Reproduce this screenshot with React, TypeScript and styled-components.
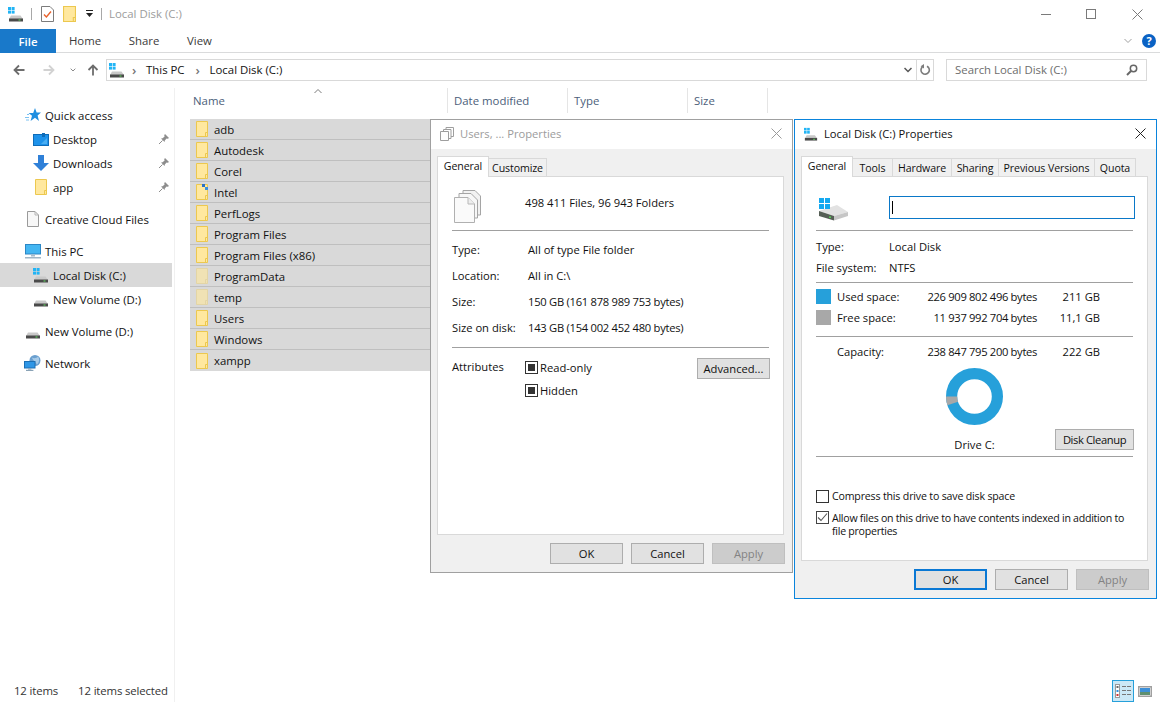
import React, { FC } from "react";
import styled, { createGlobalStyle } from "styled-components";

const folders = [
  "adb",
  "Autodesk",
  "Corel",
  "Intel",
  "PerfLogs",
  "Program Files",
  "Program Files (x86)",
  "ProgramData",
  "temp",
  "Users",
  "Windows",
  "xampp",
];

const FolderIcon: FC<{ dim?: boolean; link?: boolean; size?: number }> = ({ dim, link, size = 12 }) => (
  <svg width={size} height={16} viewBox="0 0 12 16" preserveAspectRatio="none" style={{ flex: "none" }}>
    <path d="M.5 .5H11.5V15.5H.5Z" fill={dim ? "#f0e2b4" : "#ffe89f"} stroke={dim ? "#e3d5a5" : "#ecc84f"} />
    <path d="M9.5 15.5V11.5H11.5" fill="none" stroke={dim ? "#e3d5a5" : "#ecc84f"} />
    {link && (
      <>
        <rect x="6" y="0" width="3" height="3" fill="#2a70c8" />
        <rect x="9" y="3" width="3" height="3" fill="#3a8fe0" />
      </>
    )}
  </svg>
);

const DriveIcon: FC<{ win?: boolean; size?: number }> = ({ win, size = 16 }) => (
  <svg width={size} height={size} viewBox="0 0 16 16" style={{ flex: "none" }}>
    <path d="M3 9.5H12.5L15 13H1Z" fill="#c9c9c9" />
    <rect x="1" y="12.5" width="14" height="3" fill="#4a4a4a" />
    <rect x="10.5" y="13.5" width="2" height="1" fill="#5fe05f" />
    {win && (
      <g fill="#21b4f5">
        <rect x="0" y="1" width="3" height="3" />
        <rect x="3.6" y="1" width="3" height="3" />
        <rect x="0" y="4.6" width="3" height="3" />
        <rect x="3.6" y="4.6" width="3" height="3" />
      </g>
    )}
  </svg>
);

const LargeDriveIcon: FC = () => (
  <svg width="32" height="26" viewBox="0 0 32 26" style={{ flex: "none" }}>
    <path d="M1 14L19 8 30 15 16 19Z" fill="#e2e2e2" />
    <path d="M1 14V19L16 23.5V19Z" fill="#565f56" />
    <path d="M16 19V23.5L30 19V15Z" fill="#c6c6c6" />
    <rect x="11" y="19.5" width="2" height="1.4" fill="#57d957" />
    <g fill="#14a9f0">
      <rect x="1" y="1" width="5" height="5" />
      <rect x="7" y="1" width="5" height="5" />
      <rect x="1" y="7" width="5" height="5" />
      <rect x="7" y="7" width="5" height="5" />
    </g>
  </svg>
);

const StarIcon: FC = () => (
  <svg width="16" height="14" viewBox="0 0 16 14" style={{ flex: "none" }}>
    <path d="M10 0L11.6 4.6H16L12.6 7.6 14 13 10 9.8 5.6 13 7 7.8 3.6 5H8.2Z" fill="#1f8fe0" />
    <path d="M0 9.5H4M1 12H4M2 6.5H4" stroke="#7cc2f2" fill="none" />
  </svg>
);

const DesktopIcon: FC = () => (
  <svg width="16" height="13" viewBox="0 0 16 13" style={{ flex: "none" }}>
    <rect x=".5" y="1.5" width="15" height="11" fill="#1e92ea" stroke="#0f6cb8" />
    <path d="M9 0H12V4H9Z" fill="#0f6cb8" />
    <path d="M8 11L14 5V11Z" fill="#49aef3" />
  </svg>
);

const DownloadsIcon: FC = () => (
  <svg width="16" height="16" viewBox="0 0 16 16" style={{ flex: "none" }}>
    <path d="M5 0H11V8H16L8 16 0 8H5Z" fill="#2f80d8" />
  </svg>
);

const PinIcon: FC = () => (
  <svg width="10" height="10" viewBox="0 0 10 10" style={{ flex: "none" }}>
    <path d="M6 0L10 4 8.8 4.8 7.6 4.4 5.8 6.4 5.6 8 2 4.4 3.6 4.2 5.6 2.4 5.2 1.2Z" fill="#8d8d8d" />
    <path d="M3.5 6.5L0 10" stroke="#8d8d8d" fill="none" />
  </svg>
);

const FileIcon: FC = () => (
  <svg width="12" height="16" viewBox="0 0 12 16" style={{ flex: "none" }}>
    <path d="M.5 .5H8L11.5 4V15.5H.5Z" fill="#f7f7f7" stroke="#9a9a9a" />
    <path d="M8 .5V4H11.5" fill="none" stroke="#b5b5b5" />
  </svg>
);

const MonitorIcon: FC = () => (
  <svg width="16" height="15" viewBox="0 0 16 15" style={{ flex: "none" }}>
    <rect x=".5" y=".5" width="15" height="9.5" fill="#44b6f2" stroke="#2c87c6" />
    <rect x="6" y="10.5" width="4" height="2" fill="#a8bccb" />
    <rect x="0" y="13" width="16" height="1.5" fill="#9fb6c7" />
  </svg>
);

const NetworkIcon: FC = () => (
  <svg width="17" height="16" viewBox="0 0 17 16" style={{ flex: "none" }}>
    <circle cx="11" cy="5.5" r="5.5" fill="#6a9fcf" />
    <path d="M8 2.5C10 4 13 3 14 1.6 16 4 15 8 13 9.6 12 7 9 6 8 2.5Z" fill="#a8cbe8" />
    <rect x=".5" y="6.5" width="10.5" height="6.5" fill="#2e96e6" stroke="#1c6fb4" />
    <rect x="4" y="13.4" width="3.4" height="1.2" fill="#8aa3b6" />
    <rect x="2" y="14.8" width="7.4" height="1.2" fill="#8aa3b6" />
  </svg>
);

const NoteIcon: FC = () => (
  <svg width="13" height="16" viewBox="0 0 13 16" style={{ flex: "none" }}>
    <path d="M.5 .5H9L12.5 4V15.5H.5Z" fill="#fff" stroke="#7c7c7c" />
    <path d="M3 8.5L5.4 11 10 5.5" fill="none" stroke="#e8622c" strokeWidth="1.4" />
  </svg>
);

const QuickDropIcon: FC = () => (
  <svg width="9" height="8" viewBox="0 0 9 8" style={{ flex: "none" }}>
    <rect x="1" y="0" width="7" height="1" fill="#222" />
    <path d="M1 3H8L4.5 7Z" fill="#222" />
  </svg>
);

const StackIcon: FC = () => (
  <svg width="14" height="14" viewBox="0 0 14 14" style={{ flex: "none" }}>
    <path d="M6 .5H13.5V9.5H6Z" fill="#fff" stroke="#9e9e9e" />
    <path d="M3.5 2.5H11V11.5H3.5Z" fill="#fff" stroke="#9e9e9e" />
    <path d="M.5 4.5H8.5V13.5H.5Z" fill="#fff" stroke="#9e9e9e" />
  </svg>
);

const LargeStackIcon: FC = () => (
  <svg width="27" height="33" viewBox="0 0 27 33" style={{ flex: "none" }}>
    <path d="M9 .5H21L26.5 6V25H9Z" fill="#f2f2f2" stroke="#a5a5a5" />
    <path d="M5 3.5H17L23.5 10V28H5Z" fill="#f7f7f7" stroke="#a5a5a5" />
    <path d="M.5 7.5H14L20.5 14V32.5H.5Z" fill="#fafafa" stroke="#b0b0b0" />
    <path d="M14 7.5V14H20.5" fill="#eee" stroke="#b8b8b8" />
  </svg>
);

const ArrowIcon: FC<{ color: string; rotate?: number }> = ({ color, rotate = 0 }) => (
  <svg width="12" height="12" viewBox="0 0 12 12" style={{ transform: `rotate(${rotate}deg)`, flex: "none" }}>
    <path d="M11.5 6H1.5M6 1.5L1.5 6 6 10.5" fill="none" stroke={color} strokeWidth="1.8" />
  </svg>
);

const Chevron: FC<{ size?: number; color?: string; width?: number; up?: boolean }> = ({
  size = 6,
  color = "#555",
  width = 1.5,
  up,
}) => (
  <svg width={size + 2} height={size} viewBox="0 0 8 6" style={{ flex: "none" }}>
    <path d={up ? "M.5 5L4 1.5 7.5 5" : "M.5 1L4 4.5 7.5 1"} fill="none" stroke={color} strokeWidth={width} />
  </svg>
);

const CloseIcon: FC<{ color: string }> = ({ color }) => (
  <svg width="11" height="11" viewBox="0 0 11 11" style={{ flex: "none" }}>
    <path d="M.5 .5L10.5 10.5M10.5 .5L.5 10.5" stroke={color} fill="none" />
  </svg>
);

const Donut: FC = () => (
  <svg width="57" height="57" viewBox="0 0 56 56" style={{ flex: "none" }}>
    <circle cx="28" cy="28" r="22.5" fill="none" stroke="#26a0da" strokeWidth="11" />
    <path d="M5.5 28A22.5 22.5 0 0 0 6.6 34.95" fill="none" stroke="#a8a8a8" strokeWidth="11" />
  </svg>
);

const App: FC = () => (
  <>
    <GlobalStyle />
    <Screen>
      <TitleBar>
        <DriveIcon win />
        <TitleSep />
        <NoteIcon />
        <FolderIcon size={13} />
        <QuickDropIcon />
        <TitleSep />
        <WindowTitle>Local Disk (C:)</WindowTitle>
        <WindowButtons>
          <Minimize />
          <Maximize />
          <CloseSlot>
            <CloseIcon color="#7a7a7a" />
          </CloseSlot>
        </WindowButtons>
      </TitleBar>

      <Ribbon>
        <FileTab>File</FileTab>
        <RibbonTab $width={58}>Home</RibbonTab>
        <RibbonTab $width={60}>Share</RibbonTab>
        <RibbonTab $width={51}>View</RibbonTab>
        <RibbonRight>
          <Chevron size={6} color="#a0a0a0" width={1} />
          <HelpBadge>?</HelpBadge>
        </RibbonRight>
      </Ribbon>

      <NavBar>
        <NavButton>
          <ArrowIcon color="#6d6d6d" />
        </NavButton>
        <NavButton>
          <ArrowIcon color="#d2d2d2" rotate={180} />
        </NavButton>
        <NavMini>
          <Chevron size={4} color="#8a8a8a" />
        </NavMini>
        <NavButton>
          <ArrowIcon color="#6d6d6d" rotate={90} />
        </NavButton>
        <AddressBox>
          <DriveIcon win />
          <Crumb>
            <CrumbArrow>›</CrumbArrow>This PC
          </Crumb>
          <Crumb>
            <CrumbArrow>›</CrumbArrow>Local Disk (C:)
          </Crumb>
          <AddressTools>
            <Chevron size={6} color="#555" />
            <RefreshBox>
              <svg width="12" height="12" viewBox="0 0 12 12">
                <path d="M3.4 2.8A4.2 4.2 0 1 0 8 2.2" fill="none" stroke="#7c7c7c" strokeWidth="1.6" />
                <path d="M5 0V4.4L1.6 2.2Z" fill="#7c7c7c" />
              </svg>
            </RefreshBox>
          </AddressTools>
        </AddressBox>
        <SearchBox>
          Search Local Disk (C:)
          <svg width="12" height="12" viewBox="0 0 12 12">
            <circle cx="7.5" cy="4.5" r="3.2" fill="none" stroke="#666" strokeWidth="1.5" />
            <path d="M5 7L1 11" stroke="#666" strokeWidth="2" />
          </svg>
        </SearchBox>
      </NavBar>

      <Main>
        <Sidebar>
          <SideGroup>
            <SideRow>
              <SideIcon>
                <StarIcon />
              </SideIcon>
              Quick access
            </SideRow>
            <SideRow $child>
              <SideIcon>
                <DesktopIcon />
              </SideIcon>
              Desktop
              <PinSlot>
                <PinIcon />
              </PinSlot>
            </SideRow>
            <SideRow $child>
              <SideIcon>
                <DownloadsIcon />
              </SideIcon>
              Downloads
              <PinSlot>
                <PinIcon />
              </PinSlot>
            </SideRow>
            <SideRow $child>
              <SideIcon>
                <FolderIcon />
              </SideIcon>
              app
              <PinSlot>
                <PinIcon />
              </PinSlot>
            </SideRow>
          </SideGroup>
          <SideGroup>
            <SideRow>
              <SideIcon>
                <FileIcon />
              </SideIcon>
              Creative Cloud Files
            </SideRow>
          </SideGroup>
          <SideGroup>
            <SideRow>
              <SideIcon>
                <MonitorIcon />
              </SideIcon>
              This PC
            </SideRow>
            <SideRow $child $selected>
              <SideIcon>
                <DriveIcon win />
              </SideIcon>
              Local Disk (C:)
            </SideRow>
            <SideRow $child>
              <SideIcon>
                <DriveIcon />
              </SideIcon>
              New Volume (D:)
            </SideRow>
          </SideGroup>
          <SideGroup>
            <SideRow>
              <SideIcon>
                <DriveIcon />
              </SideIcon>
              New Volume (D:)
            </SideRow>
          </SideGroup>
          <SideGroup>
            <SideRow>
              <SideIcon>
                <NetworkIcon />
              </SideIcon>
              Network
            </SideRow>
          </SideGroup>
        </Sidebar>

        <Content>
          <ColumnHeader>
            <Column $width={258}>
              Name
              <SortCaret>
                <Chevron size={6} color="#7a7a7a" width={1} up />
              </SortCaret>
            </Column>
            <Column $width={120}>Date modified</Column>
            <Column $width={120}>Type</Column>
            <Column $width={80}>Size</Column>
          </ColumnHeader>
          <FileList>
            {folders.map((name, i) => (
              <FileRow key={name}>
                <FolderIcon dim={i === 7 || i === 8} link={name === "Intel"} />
                {name}
              </FileRow>
            ))}
          </FileList>
        </Content>
      </Main>

      <StatusBar>
        <span>12 items</span>
        <span>12 items selected</span>
        <ViewButtons>
          <DetailsToggle>
            <svg width="16" height="14" viewBox="0 0 16 14">
              <rect x=".5" y=".5" width="4" height="13" fill="#fff" stroke="#9a9a9a" />
              <rect x="1.5" y="2" width="2" height="2" fill="#6a6a6a" />
              <rect x="1.5" y="6" width="2" height="2" fill="#2a8ee0" />
              <rect x="1.5" y="10" width="2" height="2" fill="#d03030" />
              <path d="M7 2.5H11M12 2.5H16M7 6.5H11M12 6.5H16M7 10.5H11M12 10.5H16" stroke="#777" />
            </svg>
          </DetailsToggle>
          <svg width="14" height="11" viewBox="0 0 14 11">
            <rect x=".75" y=".75" width="12.5" height="9.5" fill="#fff" stroke="#a0a0a0" strokeWidth="1.5" />
            <rect x="2" y="2" width="10" height="4" fill="#3d8fd8" />
            <rect x="2" y="6" width="10" height="3" fill="#5f8f6f" />
          </svg>
        </ViewButtons>
      </StatusBar>

      <Dialog $left={430} $top={119} $borderColor="#a0a0a0">
        <DialogTitle $inactive>
          <StackIcon />
          <span>Users, ... Properties</span>
          <DialogClose>
            <CloseIcon color="#9a9a9a" />
          </DialogClose>
        </DialogTitle>
        <DialogBody>
          <Tabs>
            <Tab $active $width={52}>
              General
            </Tab>
            <Tab $width={59}>Customize</Tab>
          </Tabs>
          <Panel $height={359}>
            <PanelHead>
              <HeadIcon $top={13}>
                <LargeStackIcon />
              </HeadIcon>
              <HeadText>498 411 Files, 96 943 Folders</HeadText>
            </PanelHead>
            <Divider />
            <InfoList $rowHeight={26} $top={5} $bottom={7} $labelWidth={76}>
              <span>Type:</span>
              <span>All of type File folder</span>
              <span>Location:</span>
              <span>All in C:\</span>
              <span>Size:</span>
              <Digits>150 GB (161 878 989 753 bytes)</Digits>
              <span>Size on disk:</span>
              <Digits>143 GB (154 002 452 480 bytes)</Digits>
            </InfoList>
            <Divider />
            <Attributes>
              <AttributesLabel>Attributes</AttributesLabel>
              <AttributeList>
                <CheckRow>
                  <CheckBox $mixed />
                  Read-only
                </CheckRow>
                <CheckRow>
                  <CheckBox $mixed />
                  Hidden
                </CheckRow>
              </AttributeList>
              <DialogButton>Advanced...</DialogButton>
            </Attributes>
          </Panel>
          <DialogFooter>
            <DialogButton>OK</DialogButton>
            <DialogButton>Cancel</DialogButton>
            <DialogButton $disabled>Apply</DialogButton>
          </DialogFooter>
        </DialogBody>
      </Dialog>

      <Dialog $left={794} $top={119} $borderColor="#0a84dc">
        <DialogTitle>
          <DriveIcon win size={14} />
          <span>Local Disk (C:) Properties</span>
          <DialogClose>
            <CloseIcon color="#222" />
          </DialogClose>
        </DialogTitle>
        <DialogBody>
          <Tabs>
            <Tab $active $width={52}>
              General
            </Tab>
            <Tab $width={41}>Tools</Tab>
            <Tab $width={60}>Hardware</Tab>
            <Tab $width={48}>Sharing</Tab>
            <Tab $width={97}>Previous Versions</Tab>
            <Tab $width={42}>Quota</Tab>
          </Tabs>
          <Panel $height={385}>
            <PanelHead>
              <HeadIcon $top={20}>
                <LargeDriveIcon />
              </HeadIcon>
              <NameInput>
                <Caret />
              </NameInput>
            </PanelHead>
            <Divider />
            <InfoList $rowHeight={21} $top={5} $bottom={4} $labelWidth={73}>
              <span>Type:</span>
              <span>Local Disk</span>
              <span>File system:</span>
              <span>NTFS</span>
            </InfoList>
            <Divider />
            <SpaceGrid>
              <Swatch $color="#26a0da" />
              <span>Used space:</span>
              <SpaceValue $tight>226 909 802 496 bytes</SpaceValue>
              <SpaceValue>211 GB</SpaceValue>
              <Swatch $color="#a8a8a8" />
              <span>Free space:</span>
              <SpaceValue $tight>11 937 992 704 bytes</SpaceValue>
              <SpaceValue>11,1 GB</SpaceValue>
            </SpaceGrid>
            <Divider />
            <CapacityGrid>
              <span />
              <span>Capacity:</span>
              <SpaceValue $tight>238 847 795 200 bytes</SpaceValue>
              <SpaceValue>222 GB</SpaceValue>
            </CapacityGrid>
            <ChartArea>
              <ChartColumn>
                <Donut />
                <span>Drive C:</span>
              </ChartColumn>
              <CleanupSlot>
                <DialogButton $width={79} $tight>
                  Disk Cleanup
                </DialogButton>
              </CleanupSlot>
            </ChartArea>
            <Divider />
            <Options>
              <CheckRow>
                <CheckBox />
                Compress this drive to save disk space
              </CheckRow>
              <CheckRow $top>
                <CheckBox $checked>
                  <svg width="11" height="11" viewBox="0 0 11 11">
                    <path d="M1 5.5L4 8.5 10 1.5" fill="none" stroke="#555" strokeWidth="1.1" />
                  </svg>
                </CheckBox>
                <IndexLabel>
                  Allow files on this drive to have contents indexed in addition to
                  <br />
                  file properties
                </IndexLabel>
              </CheckRow>
            </Options>
          </Panel>
          <DialogFooter>
            <DialogButton $default>OK</DialogButton>
            <DialogButton>Cancel</DialogButton>
            <DialogButton $disabled>Apply</DialogButton>
          </DialogFooter>
        </DialogBody>
      </Dialog>
    </Screen>
  </>
);

export default App;

const GlobalStyle = createGlobalStyle`
  html, body {
    margin: 0;
    padding: 0;
    background: #fff;
  }
  * {
    box-sizing: border-box;
  }
`;

const Screen = styled.div`
  position: relative;
  width: 1160px;
  height: 702px;
  overflow: hidden;
  display: flex;
  flex-direction: column;
  background: #fff;
  color: #000;
  font-family: "Open Sans", "Noto Sans", sans-serif;
  font-size: 11.4px;
`;

const TitleBar = styled.div`
  height: 29px;
  display: flex;
  align-items: center;
  padding: 0 0 1px 8px;
  gap: 9px;
  flex: none;
`;

const TitleSep = styled.div`
  width: 1px;
  height: 12px;
  background: #a8a8a8;
  margin: 0 0 0 -2px;
`;

const WindowTitle = styled.div`
  color: #9c9c9c;
  margin-left: -2px;
  padding-bottom: 1px;
`;

const WindowButtons = styled.div`
  margin-left: auto;
  display: flex;
  align-items: center;
  gap: 35px;
  padding-right: 18px;
`;

const CloseSlot = styled.span`
  display: flex;
  margin: 0 -1px 0 1px;
`;

const Minimize = styled.div`
  width: 10px;
  height: 1px;
  background: #7a7a7a;
`;

const Maximize = styled.div`
  width: 10px;
  height: 10px;
  border: 1px solid #7a7a7a;
`;

const Ribbon = styled.div`
  height: 24px;
  display: flex;
  flex: none;
  border-bottom: 1px solid #dadbdc;
`;

const FileTab = styled.div`
  width: 56px;
  height: 24px;
  background: #1979ca;
  color: #fff;
  display: flex;
  align-items: center;
  justify-content: center;
  font-weight: 600;
`;

const RibbonTab = styled.div<{ $width: number }>`
  width: ${(p) => p.$width}px;
  display: flex;
  align-items: center;
  justify-content: center;
  color: #3b3b3b;
`;

const RibbonRight = styled.div`
  margin-left: auto;
  display: flex;
  align-items: center;
  gap: 10px;
  padding-right: 4px;
`;

const HelpBadge = styled.div`
  width: 14px;
  height: 14px;
  border-radius: 50%;
  background: #0a62c4;
  color: #fff;
  font-size: 11px;
  font-weight: 700;
  line-height: 14px;
  text-align: center;
`;

const NavBar = styled.div`
  height: 35px;
  flex: none;
  display: flex;
  align-items: center;
  padding: 0 13px 2px 13px;
`;

const NavButton = styled.div`
  width: 12px;
  height: 12px;
  margin-right: 18px;
  display: flex;

  &:nth-child(4) {
    margin-right: 7px;
  }
`;

const NavMini = styled.div`
  width: 6px;
  display: flex;
  justify-content: center;
  margin: 0 11px 0 -3px;
`;

const AddressBox = styled.div`
  width: 828px;
  height: 22px;
  border: 1px solid #d9d9d9;
  display: flex;
  align-items: center;
  padding-left: 2px;
  color: #111;
`;

const Crumb = styled.div`
  display: flex;
  align-items: center;
  margin-left: 7px;

  & + & {
    margin-left: 11px;
  }
`;

const CrumbArrow = styled.span`
  color: #777;
  font-size: 13px;
  font-weight: 600;
  width: 14px;
  line-height: 10px;
`;

const AddressTools = styled.div`
  margin-left: auto;
  height: 100%;
  display: flex;
  align-items: center;
  gap: 4px;
`;

const RefreshBox = styled.div`
  width: 17px;
  height: 100%;
  border-left: 1px solid #d9d9d9;
  display: flex;
  align-items: center;
  justify-content: center;
`;

const SearchBox = styled.div`
  width: 201px;
  height: 22px;
  margin-left: 12px;
  border: 1px solid #d9d9d9;
  color: #6d6d6d;
  display: flex;
  align-items: center;
  justify-content: space-between;
  padding: 0 8px 0 8px;
`;

const Main = styled.div`
  flex: 1;
  min-height: 0;
  display: flex;
`;

const Sidebar = styled.div`
  width: 175px;
  flex: none;
  border-right: 1px solid #f0f0f0;
  padding: 15px 2px 0 0;
  display: flex;
  flex-direction: column;
  gap: 8px;
`;

const SideGroup = styled.div`
  display: flex;
  flex-direction: column;
`;

const SideRow = styled.div<{ $child?: boolean; $selected?: boolean }>`
  height: 24px;
  display: flex;
  align-items: center;
  padding-left: ${(p) => (p.$child ? 32 : 24)}px;
  background: ${(p) => (p.$selected ? "#d9d9d9" : "transparent")};
  color: #111;
`;

const SideIcon = styled.span`
  width: 17px;
  margin-right: 4px;
  display: flex;
  align-items: center;
  justify-content: center;
`;

const PinSlot = styled.span`
  margin-left: auto;
  padding-right: 3px;
  display: flex;
`;

const Content = styled.div`
  flex: 1;
  min-width: 0;
  padding-left: 15px;
`;

const ColumnHeader = styled.div`
  height: 25px;
  display: flex;
  color: #4c607a;
`;

const Column = styled.div<{ $width: number }>`
  position: relative;
  width: ${(p) => p.$width}px;
  padding-left: ${(p) => (p.$width === 258 ? 3 : 6)}px;
  border-right: 1px solid #e5e5e5;
  display: flex;
  align-items: center;
`;

const SortCaret = styled.span`
  position: absolute;
  top: 0;
  left: 124px;
  display: flex;
`;

const FileList = styled.div`
  margin-top: 6px;
  width: 240px;
`;

const FileRow = styled.div`
  height: 21px;
  display: flex;
  align-items: center;
  gap: 6px;
  padding-left: 6px;
  background: #d9d9d9;
  border-bottom: 1px solid #bfbfbf;
  color: #111;

  &:last-child {
    border-bottom: 0;
  }
`;

const StatusBar = styled.div`
  position: absolute;
  left: 14px;
  right: 0;
  bottom: 0;
  height: 22px;
  display: flex;
  align-items: center;
  gap: 20px;
  color: #333;
  letter-spacing: -0.15px;

  & > span {
    padding-bottom: 1px;
  }
`;

const ViewButtons = styled.div`
  margin-left: auto;
  display: flex;
  align-items: center;
  gap: 4px;
  padding-right: 8px;
`;

const DetailsToggle = styled.div`
  width: 22px;
  height: 22px;
  background: #cbe8f6;
  border: 1px solid #26a0da;
  display: flex;
  align-items: center;
  justify-content: center;
`;

const Dialog = styled.div<{ $left: number; $top: number; $borderColor: string }>`
  position: absolute;
  left: ${(p) => p.$left}px;
  top: ${(p) => p.$top}px;
  width: 363px;
  border: 1px solid ${(p) => p.$borderColor};
  background: #f0f0f0;
  display: flex;
  flex-direction: column;
  font-size: 11.2px;
`;

const DialogTitle = styled.div<{ $inactive?: boolean }>`
  height: 29px;
  background: #fff;
  display: flex;
  align-items: center;
  gap: 6px;
  padding: 0 10px 2px 9px;
  color: ${(p) => (p.$inactive ? "#9c9c9c" : "#111")};
`;

const DialogClose = styled.span`
  margin-left: auto;
  display: flex;
`;

const DialogBody = styled.div`
  padding: 7px 7px 8px 6px;
  display: flex;
  flex-direction: column;
`;

const Tabs = styled.div`
  height: 21px;
  display: flex;
  align-items: flex-end;
  position: relative;
  z-index: 1;
  margin-bottom: -1px;
`;

const Tab = styled.div<{ $active?: boolean; $width: number }>`
  width: ${(p) => p.$width}px;
  height: ${(p) => (p.$active ? 21 : 19)}px;
  padding-bottom: ${(p) => (p.$active ? 3 : 0)}px;
  display: flex;
  align-items: center;
  justify-content: center;
  white-space: nowrap;
  font-size: 10.6px;
  letter-spacing: -0.1px;
  background: ${(p) => (p.$active ? "#fff" : "#f0f0f0")};
  border: 1px solid #d9d9d9;
  border-bottom: ${(p) => (p.$active ? "0" : "1px solid #d9d9d9")};
  margin-left: ${(p) => (p.$active ? 0 : -1)}px;
  position: relative;
  z-index: ${(p) => (p.$active ? 1 : 0)};
  color: #111;
`;

const Panel = styled.div<{ $height: number }>`
  width: 347px;
  height: ${(p) => p.$height}px;
  background: #fff;
  border: 1px solid #d9d9d9;
  padding: 0 14px;
  display: flex;
  flex-direction: column;
  color: #111;
`;

const PanelHead = styled.div`
  height: 53px;
  flex: none;
  display: flex;
  align-items: flex-start;
`;

const HeadIcon = styled.div<{ $top: number }>`
  width: 73px;
  flex: none;
  padding: ${(p) => p.$top}px 0 0 2px;
  display: flex;
`;

const HeadText = styled.span`
  margin-top: 18px;
`;

const NameInput = styled.div`
  width: 246px;
  height: 23px;
  flex: none;
  margin-top: 19px;
  border: 1px solid #0a78c8;
  display: flex;
  align-items: center;
  padding-left: 2px;
`;

const Caret = styled.div`
  width: 1px;
  height: 13px;
  background: #000;
`;

const Divider = styled.div`
  height: 1px;
  flex: none;
  background: #a0a0a0;
`;

const InfoList = styled.div<{ $rowHeight: number; $top: number; $bottom: number; $labelWidth: number }>`
  display: grid;
  grid-template-columns: ${(p) => p.$labelWidth}px 1fr;
  grid-auto-rows: ${(p) => p.$rowHeight}px;
  align-items: center;
  padding: ${(p) => p.$top}px 0 ${(p) => p.$bottom}px;
  flex: none;
`;

const Digits = styled.span`
  letter-spacing: -0.27px;
`;

const Attributes = styled.div`
  display: grid;
  grid-template-columns: 73px 1fr auto;
  padding-top: 10px;
  margin-right: -1px;
  align-items: start;
`;

const AttributesLabel = styled.span`
  margin-top: 1px;
`;

const AttributeList = styled.div`
  display: flex;
  flex-direction: column;
  gap: 8px;
  padding-top: 2px;
`;

const CheckRow = styled.div<{ $top?: boolean }>`
  display: flex;
  align-items: ${(p) => (p.$top ? "flex-start" : "center")};
  gap: 2px;
  line-height: 13px;
  min-height: 15px;
  white-space: nowrap;
`;

const CheckBox = styled.span<{ $mixed?: boolean; $checked?: boolean }>`
  width: 13px;
  height: 13px;
  flex: none;
  border: 1px solid #333;
  display: flex;
  align-items: center;
  justify-content: center;
  background: #fff;
  ${(p) => (p.$mixed ? "padding: 2px; background-clip: content-box; background-color: #333;" : "")}
  ${(p) => (p.$checked ? "border-color: #444;" : "")}
`;

const SpaceGrid = styled.div`
  display: grid;
  grid-template-columns: 21px 80px 120px 63px;
  grid-auto-rows: 21px;
  align-items: center;
  padding: 3px 0 8px;
  flex: none;
`;

const CapacityGrid = styled(SpaceGrid)`
  padding: 3px 0 0;
  grid-auto-rows: 22px;
`;

const Swatch = styled.span<{ $color: string }>`
  width: 15px;
  height: 15px;
  background: ${(p) => p.$color};
`;

const SpaceValue = styled.span<{ $tight?: boolean }>`
  text-align: right;
  white-space: nowrap;
  letter-spacing: ${(p) => (p.$tight ? "-0.33px" : "0")};
`;

const ChartArea = styled.div`
  flex: none;
  display: grid;
  grid-template-columns: 1fr auto 1fr;
  grid-template-rows: 88px;
  height: 94px;
  padding-bottom: 6px;
`;

const ChartColumn = styled.div`
  grid-column: 2;
  display: flex;
  flex-direction: column;
  align-items: center;
  gap: 12px;
  padding-top: 6px;
`;

const CleanupSlot = styled.div`
  grid-column: 3;
  justify-self: end;
  align-self: end;
  margin-right: -1px;
`;

const Options = styled.div`
  padding-top: 32px;
  display: flex;
  flex-direction: column;
  gap: 7px;
  font-size: 10.6px;
  letter-spacing: -0.17px;

  & > div {
    gap: 3px;
  }
`;

const IndexLabel = styled.span`
  margin-top: 1px;
  letter-spacing: -0.26px;
`;

const DialogFooter = styled.div`
  margin-top: 8px;
  display: flex;
  justify-content: flex-end;
  gap: 8px;
`;

const DialogButton = styled.div<{ $disabled?: boolean; $default?: boolean; $width?: number; $tight?: boolean }>`
  width: ${(p) => p.$width ?? 73}px;
  height: 21px;
  display: flex;
  align-items: center;
  justify-content: center;
  white-space: nowrap;
  letter-spacing: ${(p) => (p.$tight ? "-0.4px" : "0")};
  background: ${(p) => (p.$disabled ? "#cccccc" : "#e1e1e1")};
  border: ${(p) => (p.$default ? "2px solid #0a78d4" : p.$disabled ? "1px solid #bfbfbf" : "1px solid #adadad")};
  color: ${(p) => (p.$disabled ? "#838383" : "#111")};
`;
